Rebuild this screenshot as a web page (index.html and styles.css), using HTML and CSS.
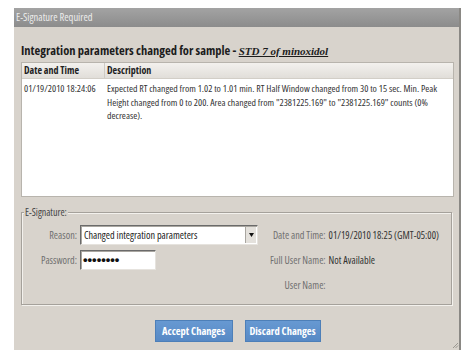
FILE: index.html
```html
<!DOCTYPE html>
<html>
<head>
<meta charset="utf-8">
<title>E-Signature Required</title>
<link rel="stylesheet" href="styles.css">
</head>
<body>
<div class="dialog">
  <div class="titlebar">E-Signature Required</div>
  <div class="content">
    <h1 class="heading">Integration parameters changed for sample - <span class="sample">STD 7 of minoxidol</span></h1>
    <div class="table">
      <div class="thead">
        <div class="col-date">Date and Time</div>
        <div class="col-desc">Description</div>
      </div>
      <div class="trow">
        <div class="col-date">01/19/2010 18:24:06</div>
        <div class="col-desc">Expected RT changed from 1.02 to 1.01 min. RT Half Window changed from 30 to 15 sec. Min. Peak Height changed from 0 to 200. Area changed from "2381225.169" to "2381225.169" counts (0% decrease).</div>
      </div>
    </div>
    <fieldset class="group">
      <legend class="legend">E-Signature:</legend>
      <div class="group-body">
        <div class="form-grid">
          <div class="label">Reason:</div>
          <div class="select">
            <span class="select-text">Changed integration parameters</span>
            <span class="select-btn"><svg width="5" height="4" viewBox="0 0 5 4"><path d="M0 0H5L2.5 4Z" fill="#111"/></svg></span>
          </div>
          <div class="label">Password:</div>
          <div class="password">&bull;&bull;&bull;&bull;&bull;&bull;&bull;&bull;</div>
        </div>
        <div class="info-grid">
          <div class="label">Date and Time:</div>
          <div class="value">01/19/2010 18:25 (GMT-05:00)</div>
          <div class="label">Full User Name:</div>
          <div class="value">Not Available</div>
          <div class="label">User Name:</div>
          <div class="value"></div>
        </div>
      </div>
    </fieldset>
    <div class="buttons">
      <button class="btn btn-accept">Accept Changes</button>
      <button class="btn btn-discard">Discard Changes</button>
    </div>
  </div>
  <svg class="grip" width="7" height="7" viewBox="0 0 7 7"><path d="M6 1L1 6M6 3.5L3.5 6" stroke="#9a9790" stroke-width="1"/></svg>
</div>
</body>
</html>
```

FILE: styles.css
```css
* { box-sizing: border-box; }
html, body { margin: 0; padding: 0; background: #ffffff; }
body {
  font-family: "Open Sans", "Liberation Sans", sans-serif;
  font-stretch: condensed;
  font-size: 10px;
  color: #333;
}
.dialog {
  position: relative;
  margin: 8px 0 0 14px;
  width: 447px;
  height: 342px;
  background: #d8d3cc;
  border-right: 2px solid #8a8884;
  display: flex;
  flex-direction: column;
}
.titlebar {
  height: 19px;
  line-height: 19px;
  padding-left: 2px;
  background: linear-gradient(#a3a3a3, #8c8c8c);
  color: #ececec;
  font-size: 10.5px;
}
.content {
  padding: 0 5px 0 7px;
  display: flex;
  flex-direction: column;
}
.heading {
  margin: 14px 0 2px 0;
  height: 19px;
  line-height: 19px;
  font-size: 12.5px;
  font-weight: bold;
  color: #1c1c1c;
  white-space: nowrap;
}
.sample {
  font-family: "Liberation Serif", serif;
  font-stretch: normal;
  font-style: italic;
  font-size: 11px;
  text-decoration: underline;
}
.table {
  height: 135px;
  border: 1px solid #b8b4ad;
  background: #ffffff;
}
.thead {
  display: flex;
  height: 16px;
  line-height: 15px;
  background: linear-gradient(#f3f1ee, #e1ded9);
  border-bottom: 1px solid #d2cec7;
  font-weight: bold;
  color: #222;
  font-size: 10px;
}
.thead .col-date { border-right: 1px solid #cfcbc4; }
.col-date { width: 83px; padding-left: 2px; flex: none; }
.col-desc { flex: 1; padding-left: 2px; padding-right: 6px; }
.trow {
  display: flex;
  padding-top: 3px;
  line-height: 13.5px;
  font-size: 9.8px;
  color: #333;
}
.group {
  margin: 9px 2px 0 0;
  padding: 7px 0 9px 0;
  border: 1px solid #a5a19b;
  box-shadow: 1px 1px 0 #f3f1ed, inset 1px 1px 0 #f3f1ed;
  min-width: 0;
}
.legend {
  margin-left: 2px;
  padding: 0 1px;
  line-height: 12px;
  background: #d8d3cc;
  color: #444;
}
.group-body {
  display: flex;
  gap: 12px;
  font-size: 10.2px;
}
.form-grid, .info-grid {
  display: grid;
  grid-auto-rows: 20px;
  row-gap: 5px;
  align-items: center;
}
.form-grid {
  grid-template-columns: 55px 178px;
  column-gap: 3px;
}
.info-grid {
  grid-template-columns: auto auto;
  column-gap: 3px;
}
.label {
  text-align: right;
  color: #707070;
}
.value { color: #333; }
.select {
  height: 20px;
  display: flex;
  align-items: stretch;
  background: #fff;
  border: 1px solid;
  border-color: #6a6a6a #e6e3de #e6e3de #6a6a6a;
  box-shadow: inset 1px 1px 0 #a9a6a0;
}
.select-text {
  flex: 1;
  line-height: 18px;
  padding-left: 3px;
  color: #222;
}
.select-btn {
  width: 11px;
  margin: 1px 1px 1px 0;
  display: flex;
  align-items: center;
  justify-content: center;
  background: #e4e1dc;
  border-left: 1px solid #a9a6a0;
}
.password {
  width: 76px;
  height: 20px;
  background: #fff;
  border: 1px solid;
  border-color: #6a6a6a #e6e3de #e6e3de #6a6a6a;
  box-shadow: inset 1px 1px 0 #a9a6a0;
  font-family: "Liberation Sans", sans-serif;
  font-stretch: normal;
  font-size: 13px;
  font-weight: bold;
  line-height: 17px;
  padding-left: 2px;
  color: #111;
}
.buttons {
  display: flex;
  justify-content: center;
  gap: 12px;
  margin-top: 15px;
}
.btn {
  height: 22px;
  padding: 0;
  border: 1px solid #4d7fb8;
  background: linear-gradient(#6799d2, #5789c5);
  color: #fff;
  font-family: inherit;
  font-stretch: condensed;
  font-size: 10.5px;
  font-weight: bold;
}
.btn-accept { width: 78px; }
.btn-discard { width: 76px; }
.grip {
  position: absolute;
  right: 0;
  bottom: 1px;
}
```
